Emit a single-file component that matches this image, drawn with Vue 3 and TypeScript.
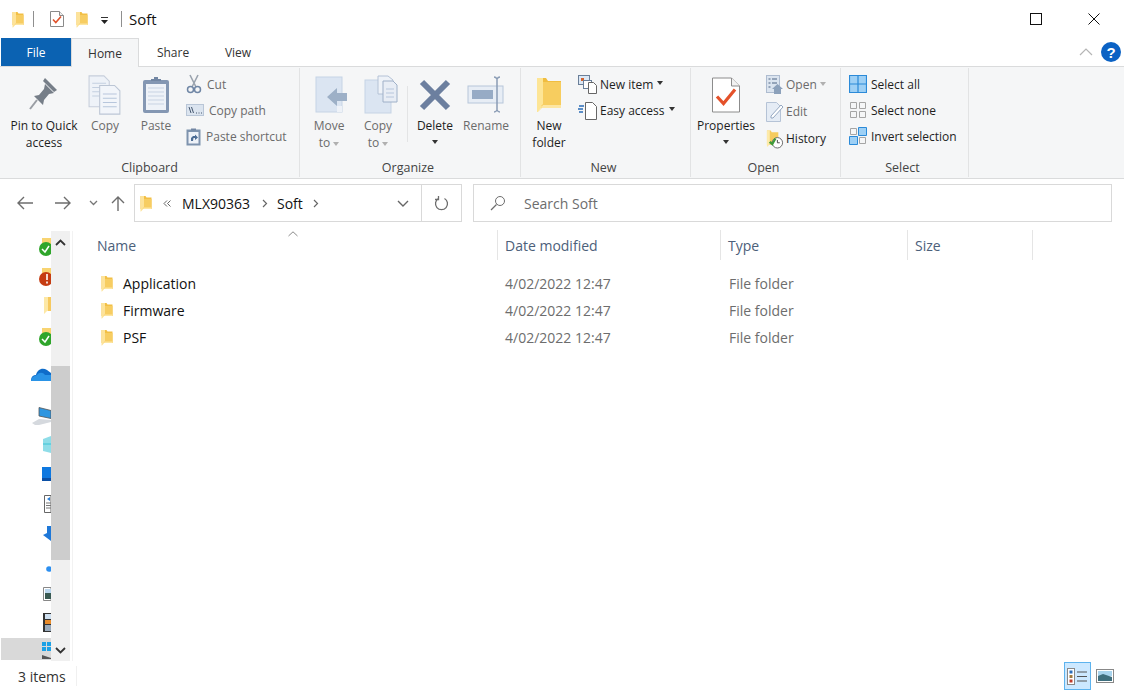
<script setup lang="ts">
interface FileRow { name: string; date: string; type: string }
const files: FileRow[] = [
  { name: 'Application', date: '4/02/2022 12:47', type: 'File folder' },
  { name: 'Firmware', date: '4/02/2022 12:47', type: 'File folder' },
  { name: 'PSF', date: '4/02/2022 12:47', type: 'File folder' },
]
</script>

<template>
  <div class="win">
    <svg class="defs" width="0" height="0" aria-hidden="true">
      <defs>
        <symbol id="folder" viewBox="0 0 12 17">
          <path d="M0.500 1h5l1 1.500h5v11.500H0.500z" fill="#f2bf45" />
          <path d="M0.500 1h3.500v12L1 16.500H0.500z" fill="#fde39a" />
          <path d="M4 4h7.500v10H2.500L4 12z" fill="#f7cd62" />
          <path d="M1 16.500L4 12.500h7.500V14H3z" fill="#fde6a2" />
        </symbol>
        <symbol id="bigfolder" viewBox="0 0 26 36">
          <path d="M1 1h9l2 3h13v27H1z" fill="#f0bd40" />
          <path d="M1 1h6v27l-5 7H1z" fill="#fde596" />
          <path d="M7 5h18v24H5l2-2z" fill="#f7cd5f" />
          <path d="M2 35l5-7h18v3H6z" fill="#fde6a2" />
        </symbol>
      </defs>
    </svg>

    <!-- Title bar -->
    <header class="titlebar">
      <svg class="qa q1"><use href="#folder" /></svg>
      <i class="tsep s1"></i>
      <svg class="q2" width="16" height="18" viewBox="0 0 16 18">
        <path d="M1.500 1.500h9l4 4v11h-13z" fill="#fff" stroke="#8a8a8a" />
        <path d="M10.500 1.500v4h4" fill="#eee" stroke="#8a8a8a" />
        <path d="M4 9.500l2.800 3L12 6.500" fill="none" stroke="#e0512a" stroke-width="1.600" />
      </svg>
      <svg class="qa q3"><use href="#folder" /></svg>
      <svg class="q4" width="9" height="9" viewBox="0 0 9 9">
        <path d="M1 1.500h7" stroke="#333" />
        <path d="M1 4h7L4.500 8z" fill="#222" />
      </svg>
      <i class="tsep s2"></i>
      <span class="title">Soft</span>
      <div class="winbtns">
        <svg class="wb" width="12" height="12" viewBox="0 0 12 12"><rect x="0.500" y="0.500" width="11" height="11" fill="none" stroke="#111" /></svg>
        <svg class="wb" width="12" height="12" viewBox="0 0 12 12"><path d="M0.500 0.500l11 11M11.500 0.500l-11 11" stroke="#111" /></svg>
      </div>
    </header>

    <!-- Tabs -->
    <nav class="tabs">
      <span class="tab file">File</span>
      <span class="tab home">Home</span>
      <span class="tab share">Share</span>
      <span class="tab view">View</span>
      <svg class="collapse" width="14" height="8" viewBox="0 0 14 8"><path d="M1 7l6-6 6 6" fill="none" stroke="#b5b5b5" stroke-width="1.200" /></svg>
      <span class="help">?</span>
    </nav>

    <!-- Ribbon -->
    <section class="ribbon">
      <div class="group g-clip">
        <div class="cmds">
          <div class="big pin">
            <svg width="34" height="40" viewBox="0 0 34 40">
              <path d="M18 9l9 9-5 1-5 6-1 5-9-9 5-1 5-6z" fill="#767e88" />
              <path d="M18 3l12 12-3 2-11-11z" fill="#767e88" />
              <path d="M10 25L3 34" stroke="#9a9ea4" stroke-width="2" />
            </svg>
            <span>Pin to Quick<br />access</span>
          </div>
          <div class="big dim copy">
            <svg width="34" height="40" viewBox="0 0 32 38">
              <path d="M1 1h14l5 5v24H1z" fill="#eef2f8" stroke="#c6cedb" />
              <path d="M4 8h13M4 12h13M4 16h13M4 20h13" stroke="#c3cfe0" />
              <path d="M11 10h14l5 5v22H11z" fill="#f2f5fa" stroke="#bcc6d5" />
              <path d="M14 18h13M14 22h13M14 26h13M14 30h13" stroke="#b7c6dc" />
            </svg>
            <span>Copy</span>
          </div>
          <div class="big dim paste">
            <svg width="28" height="40" viewBox="0 0 28 38">
              <rect x="1" y="4" width="26" height="33" rx="2" fill="#8497b3" />
              <rect x="4" y="8" width="20" height="26" fill="#eef2f8" />
              <path d="M6 12h16M6 16h16M6 20h16M6 24h16M6 28h16" stroke="#c8d3e3" />
              <path d="M9 5h10V3h-3V1h-4v2H9z" fill="#7286a3" />
            </svg>
            <span>Paste</span>
          </div>
          <div class="smalls dim">
            <div class="small">
              <svg width="16" height="20" viewBox="0 0 16 20"><path d="M4 1l6 12M12 1L6 13" stroke="#9aa3ae" stroke-width="1.600" /><circle cx="4.500" cy="15.500" r="3" fill="none" stroke="#6f86a5" stroke-width="1.500" /><circle cx="11.500" cy="15.500" r="3" fill="none" stroke="#6f86a5" stroke-width="1.500" /></svg>
              <span>Cut</span>
            </div>
            <div class="small">
              <svg width="18" height="12" viewBox="0 0 18 12"><rect x="0.500" y="0.500" width="17" height="11" fill="#dbe4ef" stroke="#b9c6d7" /><path d="M3 3l2 6M5.500 3l2 6" stroke="#44566e" /><path d="M10 9h1M12.500 9h1M15 9h1" stroke="#44566e" /></svg>
              <span>Copy path</span>
            </div>
            <div class="small">
              <svg width="15" height="19" viewBox="0 0 15 19"><rect x="0.500" y="2.500" width="14" height="16" fill="#7e93ae" /><rect x="2.500" y="5" width="10" height="11.500" fill="#eef2f8" /><path d="M5 1.500h5v2H5z" fill="#7286a3" /><path d="M5 14v-3l2-2h2V7.500l3 3-3 2.500v-2H7.500L7 14z" fill="#4c6c94" /></svg>
              <span>Paste shortcut</span>
            </div>
          </div>
        </div>
        <div class="glabel">Clipboard</div>
      </div>

      <div class="group g-org">
        <div class="cmds">
          <div class="big dim move">
            <svg width="34" height="38" viewBox="0 0 34 38">
              <rect x="1" y="1" width="26" height="35" fill="#dbe5f2" stroke="#c6d3e5" />
              <path d="M12 21L22 12v5h10v8H22v5z" fill="#9db0c7" />
              <rect x="22" y="30" width="5" height="6" fill="#eef2f8" />
            </svg>
            <span>Move<br />to <em class="caret light"></em></span>
          </div>
          <div class="big dim copyto">
            <svg width="34" height="40" viewBox="0 0 34 40">
              <rect x="1" y="5" width="26" height="33" fill="#dbe5f2" stroke="#c6d3e5" />
              <path d="M14 1h10l5 4v14H14z" fill="#eef2f8" stroke="#b4c2d6" />
              <path d="M19 6h10l4 4v17H19z" fill="#e8edf5" stroke="#9fb0c8" />
              <path d="M22 14h8M22 18h8M22 22h8" stroke="#b7c6dc" />
            </svg>
            <span>Copy<br />to <em class="caret light"></em></span>
          </div>
          <i class="inner-sep"></i>
          <div class="big del">
            <svg width="32" height="32" viewBox="0 0 32 32"><path d="M3 3l26 26M29 3L3 29" stroke="#6c7f9f" stroke-width="6" /></svg>
            <span>Delete</span>
            <em class="caret dark solo"></em>
          </div>
          <div class="big dim rename">
            <svg width="38" height="38" viewBox="0 0 38 38">
              <rect x="1" y="10" width="35" height="17" fill="#e7edf5" stroke="#b7c6da" />
              <rect x="5" y="14" width="21" height="9" fill="#97abc5" />
              <path d="M27 1c0 0 2 0 3 2 1-2 3-2 3-2M30 3v32M27 36c0 0 2 0 3-2 1 2 3 2 3 2" fill="none" stroke="#8a9cb5" stroke-width="1.500" />
            </svg>
            <span>Rename</span>
          </div>
        </div>
        <div class="glabel">Organize</div>
      </div>

      <div class="group g-new">
        <div class="cmds">
          <div class="big newf">
            <svg width="26" height="36"><use href="#bigfolder" /></svg>
            <span>New<br />folder</span>
          </div>
          <div class="smalls">
            <div class="small">
              <svg width="19" height="19" viewBox="0 0 19 19"><rect x="0.500" y="0.500" width="11" height="9" fill="#dce8f5" stroke="#6a7f99" /><rect x="3" y="3" width="3" height="3" fill="#d2622f" /><rect x="5.500" y="5.500" width="8" height="8" fill="#fff" stroke="#6a7f99" /><path d="M10.500 7.500h5l3 3v8h-8z" fill="#fff" stroke="#666" /></svg>
              <span>New item</span>
              <em class="caret dark"></em>
            </div>
            <div class="small">
              <svg width="19" height="19" viewBox="0 0 19 19"><path d="M7.500 1.500h7l4 4v13h-11z" fill="#fff" stroke="#666" /><path d="M1 5h5M0 8h5M1 11h4" stroke="#2a6cb8" stroke-width="1.300" /></svg>
              <span>Easy access</span>
              <em class="caret dark"></em>
            </div>
          </div>
        </div>
        <div class="glabel">New</div>
      </div>

      <div class="group g-open">
        <div class="cmds">
          <div class="big props">
            <svg width="30" height="37" viewBox="0 0 30 37">
              <path d="M1.500 1.500h19l8 8v26h-27z" fill="#fff" stroke="#8c8c8c" />
              <path d="M20.500 1.500v8h8" fill="#f2f2f2" stroke="#8c8c8c" />
              <path d="M6 20l6.500 7L24 13" fill="none" stroke="#e4512a" stroke-width="3.200" />
            </svg>
            <span>Properties</span>
            <em class="caret dark solo"></em>
          </div>
          <div class="smalls">
            <div class="small dim">
              <svg width="18" height="20" viewBox="0 0 18 20"><rect x="0.500" y="0.500" width="13" height="17" fill="#dbe4ef" stroke="#aebcd0" /><path d="M2.500 4h2M6 4h5M2.500 8h2M6 8h5M2.500 12h2" stroke="#7d8fa8" stroke-width="1.300" /><path d="M6 14l5.500-5 5.500 5h-2v5H8v-5z" fill="#8ca1bb" /></svg>
              <span>Open</span>
              <em class="caret light"></em>
            </div>
            <div class="small dim">
              <svg width="18" height="20" viewBox="0 0 18 20"><path d="M0.500 0.500h10l4 4v15H0.500z" fill="#e5ecf5" stroke="#b5c3d6" /><path d="M5 14L15 3l2 2L7 16H5z" fill="#fff" stroke="#94a7c1" /></svg>
              <span>Edit</span>
            </div>
            <div class="small">
              <svg width="18" height="20" viewBox="0 0 19 20"><path d="M1 1h4l1 2h7v13H1z" fill="#f5cb5e" /><path d="M1 1h3v14l-2 3H1z" fill="#fdeaa9" /><circle cx="12" cy="14" r="5.500" fill="#fff" stroke="#666" /><path d="M12 11v3h2.500" stroke="#444" fill="none" /><path d="M3 14l4 3 4-7-2-1-2.500 4.500L5 12z" fill="#3f9a3a" /></svg>
              <span>History</span>
            </div>
          </div>
        </div>
        <div class="glabel">Open</div>
      </div>

      <div class="group g-sel">
        <div class="cmds">
          <div class="smalls">
            <div class="small">
              <svg width="18" height="18" viewBox="0 0 18 18"><path d="M0.500 0.500h17v17H0.500zM9 0.500v17M0.500 9h17" fill="#9ed0f5" stroke="#2b8ad8" stroke-width="1.200" /></svg>
              <span>Select all</span>
            </div>
            <div class="small">
              <svg width="18" height="18" viewBox="0 0 18 18"><path d="M1.500 1.500h6v6h-6zM10.500 1.500h6v6h-6zM1.500 10.500h6v6h-6zM10.500 10.500h6v6h-6z" fill="#f5f6f7" stroke="#a5a5a5" /></svg>
              <span>Select none</span>
            </div>
            <div class="small">
              <svg width="18" height="18" viewBox="0 0 18 18"><path d="M1.500 1.500h6v6h-6zM10.500 10.500h6v6h-6z" fill="#f5f6f7" stroke="#a5a5a5" /><path d="M9.500 0.500h8v8h-8zM0.500 9.500h8v8h-8z" fill="#9ed0f5" stroke="#2b8ad8" /></svg>
              <span>Invert selection</span>
            </div>
          </div>
        </div>
        <div class="glabel">Select</div>
      </div>
    </section>

    <!-- Navigation bar -->
    <div class="navbar">
      <svg class="n-back" width="18" height="14" viewBox="0 0 18 14"><path d="M17 7H2M8 1L2 7l6 6" fill="none" stroke="#6d6d6d" stroke-width="1.400" /></svg>
      <svg class="n-fwd" width="18" height="14" viewBox="0 0 18 14"><path d="M1 7h15M10 1l6 6-6 6" fill="none" stroke="#6d6d6d" stroke-width="1.400" /></svg>
      <svg class="n-down" width="9" height="6" viewBox="0 0 9 6"><path d="M1 1l3.500 3.500L8 1" fill="none" stroke="#777" stroke-width="1.300" /></svg>
      <svg class="n-up" width="14" height="17" viewBox="0 0 14 17"><path d="M7 16V2M1 8l6-6 6 6" fill="none" stroke="#6d6d6d" stroke-width="1.400" /></svg>
      <div class="address">
        <svg class="a-folder" width="12" height="17"><use href="#folder" /></svg>
        <svg class="a-dbl" width="8" height="7" viewBox="0 0 8 7"><path d="M4 0.500L1 3.500l3 3M7.500 0.500l-3 3 3 3" fill="none" stroke="#666" /></svg>
        <span class="crumb c1">MLX90363</span>
        <svg class="a-chev" width="6" height="9" viewBox="0 0 6 9"><path d="M1 1l3.500 3.500L1 8" fill="none" stroke="#666" stroke-width="1.200" /></svg>
        <span class="crumb c2">Soft</span>
        <svg class="a-chev" width="6" height="9" viewBox="0 0 6 9"><path d="M1 1l3.500 3.500L1 8" fill="none" stroke="#666" stroke-width="1.200" /></svg>
        <svg class="a-drop" width="12" height="7" viewBox="0 0 12 7"><path d="M1 1l5 5 5-5" fill="none" stroke="#666" stroke-width="1.400" /></svg>
        <div class="refresh">
          <svg width="15" height="15" viewBox="0 0 15 15"><path d="M4.500 2.500a6 6 0 1 0 6 0" fill="none" stroke="#6d6d6d" stroke-width="1.300" /><path d="M4.500 0v3.500H1" fill="none" stroke="#6d6d6d" stroke-width="1.300" /></svg>
        </div>
      </div>
      <div class="search">
        <svg width="16" height="16" viewBox="0 0 16 16"><circle cx="10" cy="6" r="4.500" fill="none" stroke="#6d6d6d" /><path d="M6.500 9.500L1 15" stroke="#6d6d6d" stroke-width="1.200" /></svg>
        <span>Search Soft</span>
      </div>
    </div>

    <!-- Body -->
    <div class="body">
      <aside class="side">
        <div class="side-icons">
          <div class="si r1"><svg width="14" height="18" viewBox="0 0 14 18"><path d="M5 0h9v12H5z" fill="#f8d472" /><circle cx="9" cy="11" r="7" fill="#2fa52b" /><path d="M5 11l3 3 4-6" fill="none" stroke="#fff" stroke-width="1.500" /></svg></div>
          <div class="si r2"><svg width="14" height="18" viewBox="0 0 14 18"><path d="M5 0h9v12H5z" fill="#f8d472" /><circle cx="9" cy="11" r="7" fill="#c53c12" /><path d="M10 6v6M10 13.500v2" stroke="#fff" stroke-width="1.600" /></svg></div>
          <div class="si r3"><svg width="7" height="17" viewBox="0 0 7 17"><path d="M0 0h7v14H3l-3 3z" fill="#fde8a6" /><path d="M4 0h3v14H4z" fill="#f6c95f" /></svg></div>
          <div class="si r4"><svg width="14" height="18" viewBox="0 0 14 18"><path d="M5 0h9v12H5z" fill="#f8d472" /><circle cx="9" cy="11" r="7" fill="#2fa52b" /><path d="M5 11l3 3 4-6" fill="none" stroke="#fff" stroke-width="1.500" /></svg></div>
          <div class="si r5"><svg width="20" height="14" viewBox="0 0 20 14"><path d="M0 14c0-4 2-6 5-6 1-5 6-8 11-5l4 3v8z" fill="#0f6cc9" /><path d="M6 8c2-3 6-3 8 0h6v6H0c0-3 2-5 6-6z" fill="#2a93e6" /></svg></div>
          <div class="si r6"><svg width="19" height="18" viewBox="0 0 19 18"><path d="M7 0.500l12 3v8L7 9z" fill="#2f96e0" stroke="#555" stroke-width="0.800" /><path d="M0 16l7-4 12 1v2l-12 3H3z" fill="#d5d9de" /></svg></div>
          <div class="si r7"><svg width="8" height="17" viewBox="0 0 8 17"><path d="M0 3l8-3v17l-8-2z" fill="#8fdde8" /><path d="M0 8h8" stroke="#3cc4d6" /></svg></div>
          <div class="si r8"><svg width="9" height="14" viewBox="0 0 9 14"><path d="M0 0h9v14H0z" fill="#0e78e0" /><path d="M0 11h9v3H0z" fill="#0b4fa5" /></svg></div>
          <div class="si r9"><svg width="7" height="18" viewBox="0 0 7 18"><path d="M0.500 0.500h6.500v17H0.500z" fill="#fff" stroke="#666" /><path d="M2 8h5M2 10.500h5M2 13h5" stroke="#777" /><path d="M3 4l3-2v4z" fill="#2a7fd8" /></svg></div>
          <div class="si r10"><svg width="8" height="15" viewBox="0 0 8 15"><path d="M0 9l4-2V0h4v15z" fill="#1e78d8" /></svg></div>
          <div class="si r11"><svg width="5" height="6" viewBox="0 0 5 6"><circle cx="3" cy="3" r="2.800" fill="#2c8ff0" /></svg></div>
          <div class="si r12"><svg width="8" height="14" viewBox="0 0 8 14"><path d="M0.500 0.500h7.500v13H0.500z" fill="#fff" stroke="#888" /><path d="M2 6h6v6H2z" fill="#395a52" /><path d="M2 2h6v4H2z" fill="#bcd8ef" /></svg></div>
          <div class="si r13"><svg width="8" height="19" viewBox="0 0 8 19"><path d="M0 0h8v19H0z" fill="#333" /><path d="M2 1h6v5H2z" fill="#cfe0f0" /><path d="M2 7h6v4H2z" fill="#e88b2a" /><path d="M2 12h6v6H2z" fill="#9ab" /></svg></div>
          <div class="si r14">
            <svg width="9" height="17" viewBox="0 0 9 17"><path d="M0 0h4v4H0zM5 0h4v4H5zM0 5h4v4H0zM5 5h4v4H5z" fill="#1ba1e6" /><path d="M0 13l9 3v1H0z" fill="#555" /></svg>
          </div>
        </div>
        <div class="scrollbar">
          <div class="sb-btn"><svg width="11" height="7" viewBox="0 0 11 7"><path d="M1 6l4.500-4.500L10 6" fill="none" stroke="#333" stroke-width="1.800" /></svg></div>
          <div class="sb-gap1"></div>
          <div class="sb-thumb"></div>
          <div class="sb-gap2"></div>
          <div class="sb-btn"><svg width="11" height="7" viewBox="0 0 11 7"><path d="M1 1l4.500 4.500L10 1" fill="none" stroke="#333" stroke-width="1.800" /></svg></div>
        </div>
        <div class="side-rule"></div>
      </aside>

      <main class="list">
        <div class="head">
          <svg class="sort" width="10" height="6" viewBox="0 0 10 6"><path d="M0.500 5L5 0.800 9.500 5" fill="none" stroke="#8a8a8a" /></svg>
          <div class="th name">Name</div>
          <div class="th date">Date modified</div>
          <div class="th type">Type</div>
          <div class="th size">Size</div>
        </div>
        <div v-for="f in files" :key="f.name" class="row">
          <div class="cell-name">
            <svg class="ficon" width="12" height="17"><use href="#folder" /></svg>
            <span>{{ f.name }}</span>
          </div>
          <div class="cell-date">{{ f.date }}</div>
          <div class="cell-type">{{ f.type }}</div>
        </div>
      </main>
    </div>

    <!-- Status bar -->
    <footer class="status">
      <span class="count">3 items</span>
      <i class="st-sep"></i>
      <div class="views">
        <span class="vbtn active">
          <svg width="21" height="17" viewBox="0 0 21 17">
            <rect x="0.500" y="0.500" width="7" height="16" fill="#fff" stroke="#888" />
            <rect x="2.500" y="2.500" width="3" height="3" fill="#2a6cb8" />
            <rect x="2.500" y="7" width="3" height="3" fill="#a07a40" />
            <rect x="2.500" y="11.500" width="3" height="3" fill="#c03a2a" />
            <path d="M10 4h10M10 8.500h10M10 13h10" stroke="#555" />
          </svg>
        </span>
        <svg class="vpic" width="18" height="14" viewBox="0 0 18 14">
          <rect x="0.500" y="0.500" width="17" height="13" fill="#fff" stroke="#888" />
          <rect x="2" y="2" width="14" height="5" fill="#a8d4ee" />
          <path d="M2 7l5-2 9 3v4H2z" fill="#3e6f7e" />
        </svg>
      </div>
    </footer>
  </div>
</template>

<style scoped>
.win {
  width: 1124px;
  height: 692px;
  background: #fff;
  display: flex;
  flex-direction: column;
  overflow: hidden;
  font-family: "Open Sans", "Noto Sans", sans-serif;
  color: #1e1e1e;
}
.defs { position: absolute; }

.titlebar {
  height: 38px;
  display: flex;
  align-items: center;
  flex: none;
}
.qa { width: 12px; height: 17px; flex: none; }
.q1 { margin-left: 12px; }
.tsep { width: 1px; height: 16px; background: #8f8f8f; flex: none; }
.s1 { margin-left: 9px; }
.q2 { margin-left: 15px; flex: none; }
.q3 { margin-left: 11px; }
.q4 { margin-left: 12px; margin-top: 3px; flex: none; }
.s2 { margin-left: 12px; }
.title { margin-left: 7px; font-size: 15px; color: #111; }
.winbtns { margin-left: auto; display: flex; align-items: center; gap: 46px; padding-right: 24px; }

.tabs {
  height: 28px;
  display: flex;
  align-items: stretch;
  position: relative;
  flex: none;
  font-size: 12px;
  box-sizing: border-box;
}
.tab { display: flex; align-items: center; justify-content: center; color: #333; }
.file { width: 70px; margin-left: 1px; background: #0b62b2; color: #fff; }
.home {
  width: 68px;
  background: #f5f6f7;
  border: 1px solid #dadbdc;
  border-bottom: none;
  box-sizing: border-box;
  height: 29px;
  position: relative;
  z-index: 2;
}
.share { width: 68px; }
.view { width: 62px; margin-left: 0; }
.collapse { margin-left: auto; align-self: center; margin-right: 8px; }
.help {
  width: 20px;
  height: 20px;
  border-radius: 50%;
  background: #0b62c4;
  color: #fff;
  font: bold 15px "Liberation Sans", sans-serif;
  display: flex;
  align-items: center;
  justify-content: center;
  align-self: center;
  margin-right: 3px;
}

.ribbon {
  height: 113px;
  flex: none;
  box-sizing: border-box;
  background: #f5f6f7;
  border-top: 1px solid #dadbdc;
  border-bottom: 1px solid #dadbdc;
  display: flex;
  font-size: 12px;
}
.group {
  display: flex;
  flex-direction: column;
  border-right: 1px solid #e2e3e4;
  box-sizing: border-box;
  margin: 1px 0;
}
.g-clip { width: 300px; }
.g-org { width: 221px; }
.g-new { width: 170px; }
.g-open { width: 150px; }
.g-sel { width: 128px; }
.cmds { flex: 1; display: flex; align-items: flex-start; position: relative; min-height: 0; }
.glabel { height: 18px; line-height: 18px; text-align: center; color: #444; font-size: 12.500px; flex: none; }
.g-org .glabel, .g-new .glabel, .g-open .glabel, .g-sel .glabel { padding-right: 4px; }
.big {
  display: flex;
  flex-direction: column;
  align-items: center;
  text-align: center;
  line-height: 17px;
  flex: none;
  color: #1e1e1e;
}
.big svg { height: 42px; margin-top: 6px; margin-bottom: 1px; flex: none; }
.dim, .dim .small { color: #6b6b6b; }
.pin { width: 72px; margin-left: 8px; }
.copy { width: 40px; margin-left: 5px; }
.paste { width: 40px; margin-left: 11px; }
.smalls { display: flex; flex-direction: column; margin-top: 3px; }
.g-clip .smalls { margin-left: 10px; }
.small { height: 26px; display: flex; align-items: center; gap: 5px; white-space: nowrap; }
.small svg { flex: none; }
.caret {
  display: inline-block;
  width: 0;
  height: 0;
  border-left: 3.500px solid transparent;
  border-right: 3.500px solid transparent;
  border-top: 4px solid #333;
  vertical-align: middle;
}
.caret.light { border-top-color: #b0b0b0; }
.caret.solo { margin-top: 6px; }
.small .caret { margin-left: 1px; margin-top: -2px; }
.move { width: 48px; margin-left: 5px; }
.move svg { margin-left: 6px; }
.copyto { width: 48px; margin-left: 1px; }
.copyto svg { margin-left: 6px; }
.inner-sep { width: 1px; height: 56px; background: #e3e4e5; margin: 18px 0 0 5px; flex: none; }
.del { width: 48px; margin-left: 3px; }
.rename { width: 50px; margin-left: 2px; }
.newf { width: 50px; margin-left: 3px; }
.g-new .smalls { margin-left: 4px; }
.g-new .small { gap: 3px; }
.props { width: 68px; margin-left: 1px; }
.g-open .smalls { margin-left: 6px; }
.g-open .small { height: 27px; gap: 2px; }
.g-sel .smalls { margin-left: 8px; }
.g-sel .small { gap: 4px; }

.navbar {
  height: 50px;
  flex: none;
  display: flex;
  align-items: center;
  box-sizing: border-box;
  padding-bottom: 2px;
}
.n-back { margin-left: 16px; flex: none; }
.n-fwd { margin-left: 20px; flex: none; }
.n-down { margin-left: 17px; flex: none; }
.n-up { margin-left: 13px; flex: none; }
.address {
  margin-left: 9px;
  width: 328px;
  height: 38px;
  box-sizing: border-box;
  border: 1px solid #d9d9d9;
  display: flex;
  align-items: center;
  font-size: 14px;
  color: #111;
}
.a-folder { margin-left: 5px; flex: none; }
.a-dbl { margin-left: 11px; flex: none; }
.c1 { margin-left: 11px; }
.a-chev { margin-left: 12px; flex: none; }
.c2 { margin-left: 9px; }
.c2 + .a-chev { margin-left: 10px; }
.a-drop { margin-left: auto; margin-right: 12px; flex: none; }
.refresh {
  width: 39px;
  height: 100%;
  border-left: 1px solid #d9d9d9;
  display: flex;
  align-items: center;
  justify-content: center;
  flex: none;
}
.search {
  margin-left: 11px;
  width: 639px;
  height: 38px;
  box-sizing: border-box;
  border: 1px solid #d9d9d9;
  display: flex;
  align-items: center;
  gap: 18px;
  padding-left: 16px;
  font-size: 14px;
  color: #6d6d6d;
}

.body { flex: 1; display: flex; min-height: 0; }
.side { width: 73px; display: flex; flex: none; position: relative; padding-top: 2px; box-sizing: border-box; }
.side-icons {
  width: 50px;
  margin-left: 1px;
  flex: none;
  display: grid;
  grid-template-rows: 31px 30px 26px 38px 36px 48px 9px 50px 10px 48px 24px 26px 31px 25px;
  align-content: start;
  overflow: hidden;
}
.si { display: flex; align-items: center; justify-content: flex-end; min-height: 0; }
.r14 { background: #d9d9d9; }
.scrollbar {
  width: 19px;
  flex: none;
  height: 430px;
  background: #f0f0f0;
  display: flex;
  flex-direction: column;
}
.sb-btn { height: 22px; display: flex; align-items: center; justify-content: center; flex: none; }
.sb-gap1 { height: 113px; flex: none; }
.sb-thumb { height: 194px; background: #cdcdcd; flex: none; }
.sb-gap2 { flex: 1; }
.side-rule { width: 1px; height: 430px; background: #f2f2f2; margin-left: 2px; }

.list { flex: 1; min-width: 0; font-size: 14px; }
.head {
  height: 40px;
  display: flex;
  position: relative;
  margin-top: 1px;
}
.sort { position: absolute; left: 215px; top: 1px; }
.th {
  height: 30px;
  display: flex;
  align-items: center;
  padding-left: 7px;
  box-sizing: border-box;
  color: #4c607a;
  border-right: 1px solid #e5e5e5;
}
.name { width: 425px; padding-left: 24px; }
.date { width: 223px; }
.type { width: 187px; }
.size { width: 125px; }
.row { height: 27px; display: flex; align-items: center; }
.cell-name { width: 425px; display: flex; align-items: center; padding-left: 28px; box-sizing: border-box; color: #111; }
.ficon { margin-right: 10px; flex: none; }
.cell-date { width: 224px; padding-left: 7px; box-sizing: border-box; color: #6d6d6d; }
.cell-type { padding-left: 7px; color: #6d6d6d; }

.status { height: 32px; flex: none; display: flex; align-items: center; font-size: 14px; }
.count { margin-left: 18px; color: #333; }
.st-sep { width: 1px; height: 20px; background: #f0f0f0; margin-left: 10px; }
.views { margin-left: auto; display: flex; align-items: center; gap: 5px; margin-right: 10px; }
.vbtn {
  width: 27px;
  height: 28px;
  box-sizing: border-box;
  display: flex;
  align-items: center;
  justify-content: center;
}
.vbtn.active { background: #cce8ff; border: 1px solid #5db3ee; }
</style>
